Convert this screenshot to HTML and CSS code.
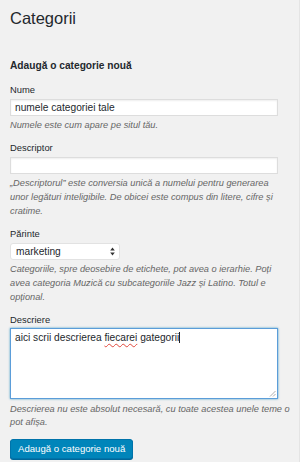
FILE: index.html
```html
<!DOCTYPE html>
<html lang="ro">

<head>
    <meta charset="UTF-8">
    <meta name="viewport" content="width=device-width, initial-scale=1.0">
    <title>Categorii</title>
    <link rel="stylesheet" href="styles.css">
</head>

<body>
    <div class="wrap">
        <h1>Categorii</h1>

        <!-- Add new category form -->
        <div class="form-wrap">
            <h2>Adaugă o categorie nouă</h2>

            <div class="form-field">
                <label>Nume</label>
                <div class="input">numele categoriei tale</div>
                <p>Numele este cum apare pe situl tău.</p>
            </div>

            <div class="form-field">
                <label>Descriptor</label>
                <div class="input"></div>
                <p>„Descriptorul” este conversia unică a numelui pentru generarea<br>unor legături inteligibile. De obicei este compus din litere, cifre și<br>cratime.</p>
            </div>

            <div class="form-field">
                <label>Părinte</label>
                <div class="select">
                    <span>marketing</span>
                    <svg class="arrows" width="5" height="9" viewBox="0 0 5 9">
                        <path d="M2.5 0.5 L4.8 3.5 L0.2 3.5 Z M2.5 8.5 L4.8 5.5 L0.2 5.5 Z" fill="#333" />
                    </svg>
                </div>
                <p>Categoriile, spre deosebire de etichete, pot avea o ierarhie. Poți<br>avea categoria Muzică cu subcategoriile Jazz și Latino. Totul e<br>opțional.</p>
            </div>

            <div class="form-field">
                <label class="tight">Descriere</label>
                <div class="textarea">aici scrii descrierea <span class="typo">fiecarei</span> gategorii<span class="caret"></span>
                    <svg class="grip" width="7" height="7" viewBox="0 0 7 7">
                        <path d="M6.5 1 L1 6.5 M6.5 4 L4 6.5" stroke="#999" stroke-width="0.8" />
                    </svg>
                </div>
                <p class="last">Descrierea nu este absolut necesară, cu toate acestea unele teme o<br>pot afișa.</p>
            </div>

            <button class="button-primary">Adaugă o categorie nouă</button>
        </div>
    </div>
</body>

</html>
```

FILE: styles.css
```css
body {
    margin: 0;
    background: #f1f1f1;
    font-family: "Liberation Sans", Arial, sans-serif;
    color: #23282d;
    height: 462px;
    overflow: hidden;
}

.wrap {
    padding: 9px 0 0 10px;
    border-right: 1px solid #e4e4e4;
    height: 100%;
    box-sizing: border-box;
    width: 300px;
}

h1 {
    font-size: 16.5px;
    font-weight: normal;
    margin: 0;
    line-height: 18px;
}

.form-wrap {
    width: 284px;
    margin-top: 32px;
}

h2 {
    font-size: 10.2px;
    font-weight: bold;
    margin: 0 0 12px 0;
    line-height: 13px;
}

.form-field {
    margin-bottom: 10px;
}

.form-field label {
    display: block;
    font-size: 9.4px;
    line-height: 12px;
    margin-bottom: 3px;
}

.form-field label.tight {
    margin-bottom: 2px;
}

.form-field p {
    font-size: 9.25px;
    font-style: italic;
    color: #666;
    line-height: 14px;
    margin: 2px 0 0 0;
    white-space: nowrap;
}

.form-field p.last {
    margin-top: 4px;
    line-height: 13px;
}

.input {
    width: 268px;
    background: #fff;
    border: 1px solid #ddd;
    box-shadow: inset 0 1px 2px rgba(0, 0, 0, 0.07);
    height: 17px;
    box-sizing: border-box;
    padding: 0 4px;
    font-size: 10.2px;
    line-height: 15px;
}

.select {
    width: 110px;
    height: 17px;
    box-sizing: border-box;
    background: #fff;
    border: 1px solid #e2e2e2;
    border-radius: 3px;
    padding: 0 4px 0 5px;
    font-size: 10.2px;
    line-height: 15px;
    display: flex;
    justify-content: space-between;
    align-items: center;
}

.textarea {
    position: relative;
    width: 268px;
    background: #fff;
    border: 1px solid #5b9dd9;
    box-shadow: 0 0 2px rgba(30, 140, 190, 0.8);
    height: 71px;
    box-sizing: border-box;
    padding: 2px 4px;
    font-size: 10.2px;
    line-height: 14px;
}

.typo {
    text-decoration: underline wavy #e0483c;
    text-decoration-thickness: 1px;
    text-underline-offset: 2px;
}

.caret {
    display: inline-block;
    width: 1px;
    height: 11px;
    background: #222;
    vertical-align: -2px;
}

.grip {
    position: absolute;
    right: 1px;
    bottom: 1px;
}

.button-primary {
    display: block;
    margin: 0;
    background: #0085ba;
    border: 1px solid #0073aa;
    border-radius: 3px;
    box-shadow: 0 1px 0 #006799;
    color: #fff;
    font-family: "Liberation Sans", Arial, sans-serif;
    font-size: 9.6px;
    height: 20px;
    padding: 0 7px;
    line-height: 18px;
}
```
